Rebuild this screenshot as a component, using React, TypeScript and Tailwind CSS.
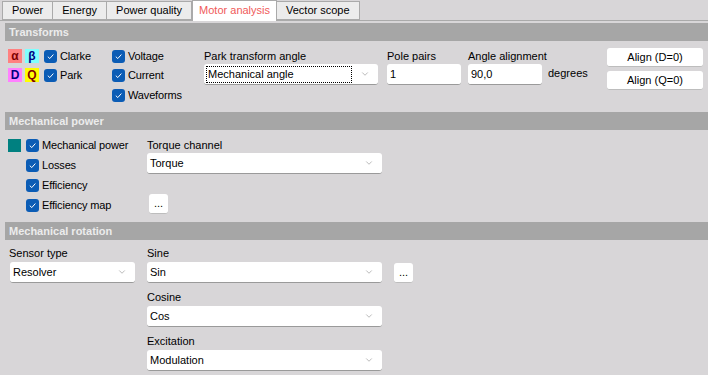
import { ChevronDown } from 'lucide-react';

const font = { fontFamily: '"Liberation Sans", Arial, sans-serif' };

function Check({ label }: { label: string }) {
    return (
        <div className="flex h-[14px] items-center gap-[3px]">
            <span className="flex h-[13px] w-[13px] items-center justify-center rounded-[3px] bg-[#0b5cb5]">
                <svg viewBox="0 0 10 10" className="h-[9px] w-[9px]">
                    <path d="M2 5.2 L4.2 7.3 L8.2 2.8" fill="none" stroke="white" strokeWidth="1.1" />
                </svg>
            </span>
            <span className="text-[11px] tracking-[-0.15px] text-black">{label}</span>
        </div>
    );
}

function Header({ title }: { title: string }) {
    return (
        <div className="ml-[5px] flex h-[18px] items-center bg-[#a6a6a6] pl-[4px] text-[11px] font-bold text-[#ececec]">
            {title}
        </div>
    );
}

function Select({ value, width, dotted }: { value: string; width: number; dotted?: boolean }) {
    return (
        <div
            className="flex h-[21px] items-center justify-between rounded-[3px] border-b border-[#9a9a9a] bg-white pl-[2px] pr-[8px]"
            style={{ width }}
        >
            <span
                className={
                    dotted
                        ? 'flex h-[17px] flex-1 items-center border border-dotted border-black pl-[1px] text-[11px]'
                        : 'pl-[1px] text-[11px]'
                }
            >
                {value}
            </span>
            <ChevronDown className="ml-[8px] h-[10px] w-[10px] text-[#8a8a8a]" strokeWidth={1.4} />
        </div>
    );
}

function Input({ value, width }: { value: string; width: number }) {
    return (
        <div
            className="flex h-[21px] items-center rounded-[3px] border-b border-[#9a9a9a] bg-white pl-[3px] text-[11px]"
            style={{ width }}
        >
            {value}
        </div>
    );
}

function Badge({ text, bg, color }: { text: string; bg: string; color: string }) {
    return (
        <span
            className="flex h-[14px] w-[14px] items-center justify-center text-[12px] font-bold leading-none"
            style={{ background: bg, color }}
        >
            {text}
        </span>
    );
}

function Dots({ className = '' }: { className?: string }) {
    return (
        <div
            className={`flex h-[20px] w-[19px] items-end justify-center rounded-[3px] border-b border-[#bdbdbd] bg-white pb-[4px] text-[11px] leading-none ${className}`}
        >
            ...
        </div>
    );
}

function Tab({ label, active }: { label: string; active?: boolean }) {
    if (active) {
        return (
            <div className="-mb-px flex h-[21px] items-center self-end border border-b-0 border-[#aaaaaa] bg-white px-[6px] pb-[1px] text-[11px] text-[#f05a5a]">
                {label}
            </div>
        );
    }
    return (
        <div className="-ml-px flex h-[19px] items-center self-end border border-[#aaaaaa] bg-[#ececec] px-[9px] text-[11px] text-black first:ml-0">
            {label}
        </div>
    );
}

export default function App() {
    return (
        <div className="h-[375px] w-[708px] overflow-hidden bg-[#d8d6d8]" style={font}>
            {/* Tabs */}
            <div className="flex h-[21px] items-end border-b border-[#aaaaaa] pl-[2px]">
                <Tab label="Power" />
                <Tab label="Energy" />
                <Tab label="Power quality" />
                <Tab label="Motor analysis" active />
                <Tab label="Vector scope" />
            </div>

            {/* Transforms */}
            <div className="pt-[2px]">
                <Header title="Transforms" />
                <div className="flex h-[71px] pt-[8px]">
                    <div className="ml-[8px] flex w-[104px] flex-col gap-[5px]">
                        <div className="flex items-center">
                            <Badge text="α" bg="#ff8080" color="#800000" />
                            <span className="ml-[3px]" />
                            <Badge text="β" bg="#80ffff" color="#000080" />
                            <span className="ml-[5px]" />
                            <Check label="Clarke" />
                        </div>
                        <div className="flex items-center">
                            <Badge text="D" bg="#ff80ff" color="#000080" />
                            <span className="ml-[3px]" />
                            <Badge text="Q" bg="#ffff00" color="#800000" />
                            <span className="ml-[5px]" />
                            <Check label="Park" />
                        </div>
                    </div>
                    <div className="flex w-[92px] flex-col gap-[5.5px]">
                        <Check label="Voltage" />
                        <Check label="Current" />
                        <Check label="Waveforms" />
                    </div>
                    <div className="flex w-[182px] flex-col gap-[1px]">
                        <span className="h-[14px] text-[11px] leading-[14px]">Park transform angle</span>
                        <Select value="Mechanical angle" width={174} dotted />
                    </div>
                    <div className="ml-px flex w-[81px] flex-col gap-[1px]">
                        <span className="h-[14px] text-[11px] leading-[14px]">Pole pairs</span>
                        <Input value="1" width={74} />
                    </div>
                    <div className="flex w-[80px] flex-col gap-[1px]">
                        <span className="h-[14px] text-[11px] leading-[14px]">Angle alignment</span>
                        <Input value="90,0" width={74} />
                    </div>
                    <div className="flex h-[36px] w-[59px] items-center pt-[12px] text-[11px]">degrees</div>
                    <div className="-mt-[1px] flex flex-col gap-[4px]">
                        <button className="h-[19px] w-[96px] rounded-[3px] border-b border-[#bdbdbd] bg-white text-[11px]">
                            Align (D=0)
                        </button>
                        <button className="h-[19px] w-[96px] rounded-[3px] border-b border-[#bdbdbd] bg-white text-[11px]">
                            Align (Q=0)
                        </button>
                    </div>
                </div>
            </div>

            {/* Mechanical power */}
            <Header title="Mechanical power" />
            <div className="flex h-[92px] pt-[8px]">
                <div className="ml-[8px] flex w-[139px] flex-col gap-[6px]">
                    <div className="flex items-center">
                        <span className="h-[13px] w-[13px] bg-[#008080]" />
                        <span className="ml-[5px]" />
                        <Check label="Mechanical power" />
                    </div>
                    <div className="ml-[18px] flex flex-col gap-[6px]">
                        <Check label="Losses" />
                        <Check label="Efficiency" />
                        <Check label="Efficiency map" />
                    </div>
                </div>
                <div className="flex flex-col">
                    <span className="h-[15px] text-[11px] leading-[14px]">Torque channel</span>
                    <Select value="Torque" width={235} />
                    <Dots className="ml-[2px] mt-[20px]" />
                </div>
            </div>

            {/* Mechanical rotation */}
            <Header title="Mechanical rotation" />
            <div className="flex pt-[6px]">
                <div className="ml-[9px] flex w-[138px] flex-col gap-[1px]">
                    <span className="h-[15px] text-[11px] leading-[14px]">Sensor type</span>
                    <div className="ml-px">
                        <Select value="Resolver" width={125} />
                    </div>
                </div>
                <div className="flex flex-col">
                    <span className="h-[16px] text-[11px] leading-[14px]">Sine</span>
                    <div className="flex items-center gap-[12px]">
                        <Select value="Sin" width={235} />
                        <Dots />
                    </div>
                    <span className="mt-[7px] h-[16px] text-[11px] leading-[14px]">Cosine</span>
                    <Select value="Cos" width={235} />
                    <span className="mt-[7px] h-[16px] text-[11px] leading-[14px]">Excitation</span>
                    <Select value="Modulation" width={235} />
                </div>
            </div>
        </div>
    );
}
